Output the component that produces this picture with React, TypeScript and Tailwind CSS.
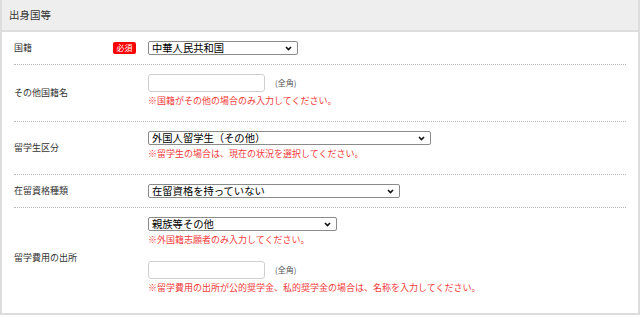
const font = { fontFamily: '"Noto Sans CJK JP", "Noto Sans", sans-serif' };

const Chevron = () => (
  <svg width="7" height="5" viewBox="0 0 7 5" className="shrink-0">
    <path d="M1 1 L3.5 3.6 L6 1" fill="none" stroke="#111" strokeWidth="1.6" />
  </svg>
);

const FakeSelect = ({ value, width }: { value: string; width: string }) => (
  <div
    className={`${width} h-[14px] flex items-center justify-between border border-[#8a8a8a] rounded-[2px] bg-white pl-[3px] pr-[5px] text-[10.3px] leading-none text-black`}
  >
    <span>{value}</span>
    <Chevron />
  </div>
);

const TextBox = () => (
  <div className="flex items-center gap-[10px]">
    <div className="w-[117px] h-[18px] border border-[#cfcfcf] rounded-[3px] bg-white" />
    <span className="text-[8px] text-[#555]">(全角)</span>
  </div>
);

const Note = ({ children }: { children: string }) => (
  <p className="mt-[2px] mb-[4px] text-[9px] leading-[14px] text-[#f23b3b]">{children}</p>
);

const Row = ({
  label,
  required,
  children,
  last,
}: {
  label: string;
  required?: boolean;
  children: React.ReactNode;
  last?: boolean;
}) => (
  <div className={`flex items-center py-[9px] ${last ? '' : 'border-b border-dotted border-[#b5b5b5]'}`}>
    <div className="w-[134px] shrink-0 flex items-center justify-between pr-[12px]">
      <span className="text-[9px] text-[#333]">{label}</span>
      {required && (
        <span className="w-[23px] h-[12px] flex items-center justify-center rounded-[2px] bg-[#ff0000] text-white text-[8px] leading-none">
          必須
        </span>
      )}
    </div>
    <div className="flex flex-col">{children}</div>
  </div>
);

export default function App() {
  return (
    <div style={font} className="w-[640px] h-[317px] bg-white">
      <div className="border-x-2 border-b-2 border-[#dddddd] pb-[5px]">
        <div className="h-[32px] bg-[#eeeeee] border-b-2 border-[#dddddd] flex items-center px-[7px]">
          <span className="text-[10.5px] text-[#333]">出身国等</span>
        </div>
        <div className="pl-[12px] pr-[12px]">
          <Row label="国籍" required>
            <FakeSelect value="中華人民共和国" width="w-[150px]" />
          </Row>
          <Row label="その他国籍名">
            <TextBox />
            <Note>※国籍がその他の場合のみ入力してください。</Note>
          </Row>
          <Row label="留学生区分">
            <FakeSelect value="外国人留学生（その他）" width="w-[283px]" />
            <Note>※留学生の場合は、現在の状況を選択してください。</Note>
          </Row>
          <Row label="在留資格種類">
            <FakeSelect value="在留資格を持っていない" width="w-[252px]" />
          </Row>
          <Row label="留学費用の出所" last>
            <FakeSelect value="親族等その他" width="w-[189px]" />
            <Note>※外国籍志願者のみ入力してください。</Note>
            <div className="mt-[10px]">
              <TextBox />
            </div>
            <Note>※留学費用の出所が公的奨学金、私的奨学金の場合は、名称を入力してください。</Note>
          </Row>
        </div>
      </div>
    </div>
  );
}
